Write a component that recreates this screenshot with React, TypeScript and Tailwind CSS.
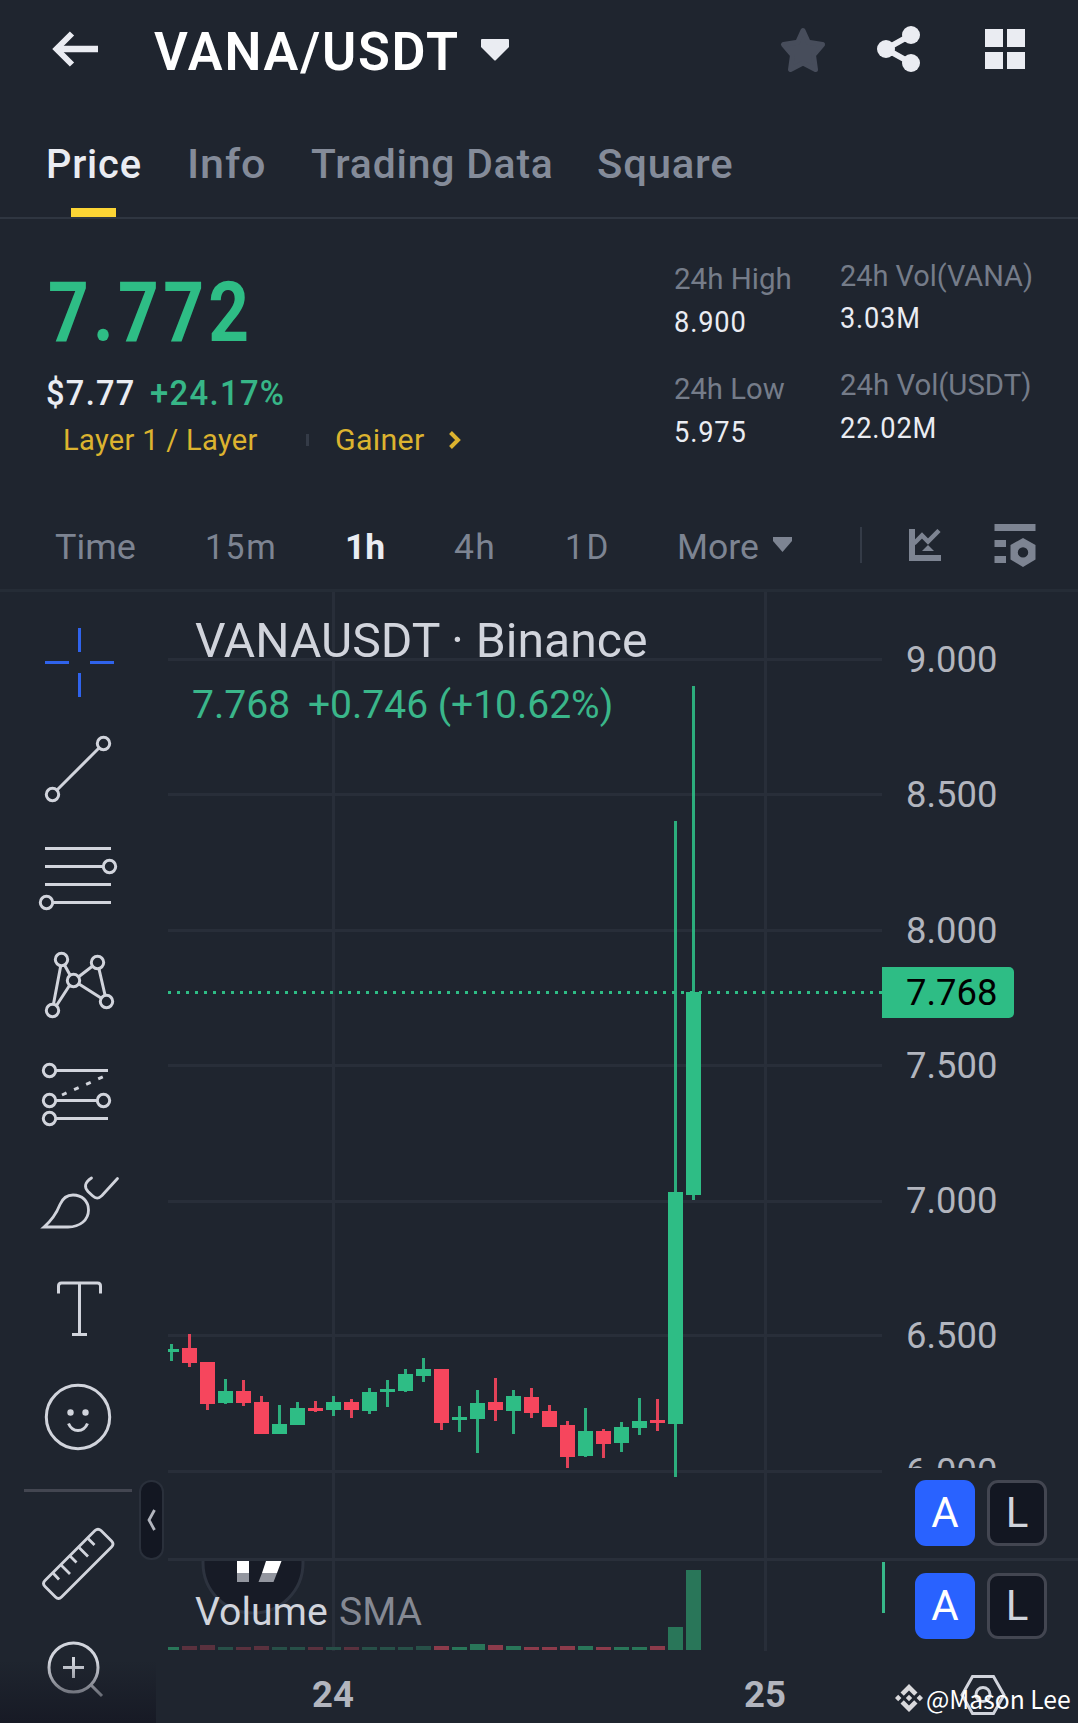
import { useLayoutEffect, useRef, useState } from "react";
import type { ReactNode } from "react";

/* Text stretched horizontally so that it fills the width set by its classes. */
function Fit({ className, children }: { className: string; children: ReactNode }) {
  const outer = useRef<HTMLSpanElement>(null);
  const inner = useRef<HTMLSpanElement>(null);
  const [scale, setScale] = useState(1);
  useLayoutEffect(() => {
    if (outer.current && inner.current) {
      setScale(outer.current.clientWidth / inner.current.offsetWidth);
    }
  }, []);
  return (
    <span ref={outer} className={`block shrink-0 whitespace-nowrap ${className}`}>
      <span ref={inner} className="inline-block origin-left whitespace-pre" style={{ transform: `scaleX(${scale})` }}>
        {children}
      </span>
    </span>
  );
}

const GREEN = "#2ebd85";
const RED = "#f6465d";

/* [rising, high, body top, body bottom, low] in page pixels */
const candles: [number, number, number, number, number][] = [
  [1, 1344, 1349.3, 1352, 1361],
  [0, 1334, 1348, 1363, 1367],
  [0, 1362, 1362, 1404, 1410],
  [1, 1379, 1391, 1403, 1404],
  [0, 1380, 1391, 1403, 1406],
  [0, 1396, 1402, 1434, 1434],
  [1, 1405, 1424, 1434, 1434],
  [1, 1402, 1408, 1425, 1425],
  [0, 1401, 1408, 1411, 1412],
  [1, 1396, 1402, 1410, 1416],
  [0, 1399, 1402, 1410, 1418],
  [1, 1388, 1392, 1411, 1414],
  [1, 1380, 1389, 1392, 1407],
  [1, 1369, 1374, 1391, 1392],
  [1, 1358, 1369, 1376, 1382],
  [0, 1369, 1369, 1423, 1430],
  [1, 1406, 1417, 1420, 1432],
  [1, 1390, 1403, 1419, 1453],
  [0, 1378, 1402, 1410, 1421],
  [1, 1390, 1396, 1411, 1434],
  [0, 1388, 1397, 1413, 1418],
  [0, 1405, 1411, 1427, 1427],
  [0, 1421, 1425, 1457, 1468],
  [1, 1408, 1431, 1456, 1457],
  [0, 1429, 1431, 1444, 1458],
  [1, 1422, 1427, 1443, 1452],
  [1, 1398, 1421, 1428, 1435],
  [0, 1399, 1420, 1423, 1431],
  [1, 821, 1192, 1424, 1477],
  [1, 686, 992, 1195, 1200],
];

const volumes = [3, 4, 5, 3, 3, 4, 3, 3, 3, 3, 3, 3, 3, 3, 4, 4, 3, 6, 5, 4, 3, 3, 4, 4, 3, 3, 3, 4, 23, 80];
const gridLines = [658, 793, 928.5, 1064, 1199.5, 1334, 1469.5];
const priceLabels = ["9.000", "8.500", "8.000", "7.500", "7.000", "6.500"];

function Header() {
  return (
    <header className="flex h-[98px] items-center pl-[52px] text-[#eaecf2]">
      <svg className="h-[36px] w-[46px] shrink-0" viewBox="0 0 46 36" fill="none" stroke="currentColor" strokeWidth="6.500">
        <path d="M4 18H46" />
        <path d="M20 2.500 4.500 18l15.500 15.500" strokeWidth="6" />
      </svg>
      <Fit className="ml-[56px] mt-[5px] w-[306px] text-[53px] leading-[60px] font-semibold tracking-[0.035em] text-white">VANA/USDT</Fit>
      <svg className="ml-[21px] mt-[2px] h-[22px] w-[28px] shrink-0" viewBox="0 0 28 22" fill="currentColor">
        <path d="M1 0H27Q28 0 28 1V8L15 21Q14 22 13 21L0 8V1Q0 0 1 0Z" />
      </svg>
      <svg className="ml-[270px] h-[48px] w-[48px] shrink-0 text-[#474d5b]" viewBox="0 0 48 48" fill="currentColor" stroke="currentColor" strokeWidth="5" strokeLinejoin="round">
        <path d="M24 5.500 29.300 17.300 43.500 19.500 34.500 30 36.500 44.500 24 38 11.500 44.500 13.500 30 4.500 19.500 18.700 17.300Z" />
      </svg>
      <svg className="ml-[50px] h-[46px] w-[43px] shrink-0" viewBox="0 0 43 46" fill="currentColor">
        <path d="M34 9 9 23 34 37" fill="none" stroke="currentColor" strokeWidth="6" />
        <circle cx="34" cy="9" r="9" />
        <circle cx="9" cy="23" r="9" />
        <circle cx="34" cy="37" r="9" />
      </svg>
      <div className="ml-[65px] grid grid-cols-2 gap-x-[4px] gap-y-[5px]">
        <i className="h-[17.500px] w-[18px] bg-current" />
        <i className="h-[17.500px] w-[18px] bg-current" />
        <i className="h-[17.500px] w-[18px] bg-current" />
        <i className="h-[17.500px] w-[18px] bg-current" />
      </div>
    </header>
  );
}

function Tabs() {
  return (
    <nav className="relative flex h-[121px] border-b-2 border-[#2f3641] pt-[43px] pl-[46px] text-[41.500px] leading-[46px] font-medium tracking-[0.02em] text-[#848b99]">
      <Fit className="w-[96px] text-[#eaecf2]">Price</Fit>
      <Fit className="ml-[45px] w-[79px]">Info</Fit>
      <Fit className="ml-[45px] w-[243px]">Trading Data</Fit>
      <Fit className="ml-[43px] w-[137px]">Square</Fit>
      <i className="absolute bottom-0 left-[71px] h-[9px] w-[45px] bg-[#fcd535]" />
    </nav>
  );
}

function Summary() {
  return (
    <section className="flex h-[281px] text-[#eaecf2]">
      <div className="w-[675px] pt-[54px]">
        <Fit className="ml-[48px] w-[205px] text-[83px] leading-[80px] font-bold tracking-[0.06em] text-[#2ebd85]">7.772</Fit>
        <div className="mt-[20px] ml-[46px] flex text-[35.500px] leading-[40px] font-medium tracking-[0.04em]">
          <Fit className="w-[90px]">$7.77</Fit>
          <Fit className="ml-[14px] w-[135px] text-[#37b687]">+24.17%</Fit>
        </div>
        <div className="mt-[10px] flex items-center pl-[63px] text-[30px] leading-[34px] tracking-[0.01em] text-[#dcb32f]">
          <Fit className="w-[195px]">Layer 1 / Layer</Fit>
          <i className="ml-[48px] h-[12px] w-[3px] bg-[#343b47]" />
          <Fit className="ml-[26px] w-[90px]">Gainer</Fit>
          <svg className="ml-[24px] h-[18px] w-[12px]" viewBox="0 0 12 18" fill="none" stroke="currentColor" strokeWidth="4">
            <path d="M1.500 1.500 9 9 1.500 16.500" />
          </svg>
        </div>
      </div>
      <div className="-ml-px flex w-[166px] flex-col pt-[42px] text-[29.500px] leading-[36px]">
        <Fit className="w-[118px] text-[#757c89]">24h High</Fit>
        <Fit className="mt-[7px] w-[73px] tracking-[0.03em]">8.900</Fit>
        <Fit className="mt-[31px] w-[111px] text-[#757c89]">24h Low</Fit>
        <Fit className="mt-[7px] w-[73px] tracking-[0.03em]">5.975</Fit>
      </div>
      <div className="flex flex-col pt-[39px] text-[29.500px] leading-[36px]">
        <Fit className="w-[193px] text-[#757c89]">24h Vol(VANA)</Fit>
        <Fit className="mt-[6px] w-[81px] tracking-[0.03em]">3.03M</Fit>
        <Fit className="mt-[31px] w-[191px] text-[#757c89]">24h Vol(USDT)</Fit>
        <Fit className="mt-[7px] w-[97px] tracking-[0.03em]">22.02M</Fit>
      </div>
    </section>
  );
}

function TimeFrames() {
  return (
    <section className="flex h-[92px] items-center border-b-[3px] border-[#252c36] pl-[55px] text-[35.500px] leading-[40px] text-[#7d8492]">
      <Fit className="mt-[4px] w-[81px]">Time</Fit>
      <Fit className="mt-[4px] ml-[69px] w-[72px] tracking-[0.05em]">15m</Fit>
      <Fit className="mt-[4px] ml-[68px] w-[40px] font-bold text-[#eaecf2]">1h</Fit>
      <Fit className="mt-[4px] ml-[69px] w-[42px] tracking-[0.04em]">4h</Fit>
      <Fit className="mt-[4px] ml-[69px] w-[46px] tracking-[0.08em]">1D</Fit>
      <Fit className="mt-[4px] ml-[66px] w-[82px]">More</Fit>
      <svg className="ml-[14px] h-[15px] w-[19px] shrink-0" viewBox="0 0 19 15" fill="currentColor">
        <path d="M0 0H19V4L9.500 15 0 4Z" />
      </svg>
      <i className="ml-[68px] h-[36px] w-[2px] bg-[#343b47]" />
      <svg className="ml-[47px] h-[32px] w-[32px] shrink-0" viewBox="0 0 32 32" fill="none" stroke="currentColor">
        <path d="M3 0V29H32" strokeWidth="6" />
        <path d="M5 14.500 13 6.500 19 12.500 30 1.500" strokeWidth="4.500" />
        <path d="M19 16 25 22H13Z" fill="currentColor" stroke="none" />
      </svg>
      <svg className="mt-[2px] ml-[53px] h-[43px] w-[42px] shrink-0" viewBox="0 0 41 43" fill="currentColor">
        <path d="M0 0H41V7H0ZM0 16H11.500V23H0ZM0 32H11.500V39H0Z" />
        <path fillRule="evenodd" d="M28.500 14 41 21V35.500L28.500 43 16 35.500V21ZM28.500 23.200A5.200 5.200 0 1 0 28.500 33.600 5.200 5.200 0 1 0 28.500 23.200Z" />
      </svg>
    </section>
  );
}

function Toolbar() {
  return (
    <aside className="relative w-[168px] shrink-0 text-[#d1d4dc]">
      <svg className="block h-[124px] w-[156px]" viewBox="0 592 156 124" stroke="#2f63ec" strokeWidth="3">
        <path d="M45 662.500H69M90 662.500H114M79.500 628V652M79.500 673V697" />
      </svg>
      <svg className="block h-[106px] w-[156px]" viewBox="0 716 156 106" fill="none" stroke="currentColor" strokeWidth="3">
        <path d="M57 790 99 748" />
        <circle cx="52.500" cy="794.500" r="6.200" />
        <circle cx="103.500" cy="743.500" r="6.200" />
      </svg>
      <svg className="block h-[108px] w-[156px]" viewBox="0 822 156 108" fill="none" stroke="currentColor" strokeWidth="3">
        <path d="M45 848.500H111M45 866.500H103M45 884.500H111M53 902.500H111" />
        <circle cx="109.500" cy="866.500" r="6.200" />
        <circle cx="46.500" cy="902.500" r="6.200" />
      </svg>
      <svg className="block h-[110px] w-[156px]" viewBox="0 930 156 110" fill="none" stroke="currentColor" strokeWidth="3">
        <path d="M60.700 966 53.500 1004M64.500 965 70 975M79 976.500 92 966.500M99 969 105 995M79 984 101 998M69.500 985.500 56.500 1005.500" />
        <circle cx="61.500" cy="959.500" r="6.200" />
        <circle cx="97.500" cy="962.500" r="6.200" />
        <circle cx="73.500" cy="980.500" r="6.200" />
        <circle cx="106.500" cy="1001.500" r="6.200" />
        <circle cx="52.500" cy="1010.500" r="6.200" />
      </svg>
      <svg className="block h-[108px] w-[156px]" viewBox="0 1040 156 108" fill="none" stroke="currentColor" strokeWidth="3">
        <path d="M56 1070.500H108M56 1100.500H97M56 1118.500H108" />
        <path d="M62 1095 106 1075.500" strokeDasharray="5 8.200" />
        <circle cx="49.500" cy="1070.500" r="6.200" />
        <circle cx="49.500" cy="1100.500" r="6.200" />
        <circle cx="103.500" cy="1100.500" r="6.200" />
        <circle cx="49.500" cy="1118.500" r="6.200" />
      </svg>
      <svg className="block h-[108px] w-[156px]" viewBox="0 1148 156 108" fill="none" stroke="currentColor" strokeWidth="2.800">
        <path d="M44 1227C51 1221 57 1212 60 1204.500C63 1197.500 67 1195 73 1195C82 1195 88.500 1201 88.500 1210C88.500 1220 80 1227 68 1227Z" />
        <path d="M91.500 1178C84.500 1182.500 84 1187 88 1191.500L92.500 1195.800C96 1199 98.500 1199 102 1195.500L117.500 1178.500" strokeLinecap="round" />
      </svg>
      <svg className="block h-[107px] w-[156px]" viewBox="0 1256 156 107" fill="none" stroke="currentColor" strokeWidth="3">
        <path d="M58.500 1293.500V1286Q58.500 1283 61.500 1283H97.500Q100.500 1283 100.500 1286V1293.500M79.500 1283V1334.500M72 1334.500H87" />
      </svg>
      <svg className="block h-[107px] w-[156px]" viewBox="0 1363 156 107" fill="none" stroke="currentColor" strokeWidth="3">
        <circle cx="78" cy="1417" r="31.700" />
        <path d="M68.500 1423.500Q71.500 1430.500 78 1430.500T87.500 1423.500" />
        <circle cx="70.500" cy="1412.500" r="3.200" fill="currentColor" stroke="none" />
        <circle cx="85.500" cy="1412.500" r="3.200" fill="currentColor" stroke="none" />
      </svg>
      <div className="flex h-[40px] items-center pl-[24px]">
        <i className="h-[3px] w-[108px] bg-[#434651]" />
      </div>
      <svg className="block h-[110px] w-[156px]" viewBox="0 1510 156 110" fill="none" stroke="currentColor" strokeWidth="2.800">
        <path d="M95 1530.500Q98 1528 101 1530.500L111.500 1541Q114.500 1544 111.500 1547L61.500 1597Q58.500 1600 55.500 1597L45 1586.500Q42 1583.500 45 1580.500Z" />
        <path d="M53 1573 59 1579.500M61 1565 70 1574M70 1556 76.500 1562.500M79 1547.500 88 1556.500M88 1538.500 94.500 1545" />
      </svg>
      <svg className="block h-[103px] w-[156px]" viewBox="0 1620 156 103" fill="none" stroke="currentColor" strokeWidth="3">
        <circle cx="73.500" cy="1667.500" r="24.500" />
        <path d="M63 1667.500H84M73.500 1657V1678M91 1685 102 1696" />
      </svg>
      <i className="absolute bottom-0 left-0 h-[62px] w-[156px] bg-linear-to-b from-[#171a25]/0 to-[#171a25]" />
      <div className="absolute top-[888px] left-[139px] flex h-[80px] w-[25px] items-center justify-center rounded-[12px] border-2 border-[#2a303b] bg-[#131722]">
        <svg className="h-[22px] w-[9px]" viewBox="0 0 9 22" fill="none" stroke="#b2b5be" strokeWidth="2.800">
          <path d="M7.500 1 2 11l5.500 10" />
        </svg>
      </div>
    </aside>
  );
}

function ScaleButtons() {
  return (
    <div className="flex gap-[12px] pl-[33px] text-center text-[42px] leading-[65px]">
      <div className="h-[66px] w-[60px] rounded-[11px] bg-[#2962ff] text-white">A</div>
      <div className="h-[66px] w-[60px] rounded-[11px] border-[3px] border-[#434651] bg-[#131722] leading-[59px] text-[#d1d4dc]">L</div>
    </div>
  );
}

function PricePane() {
  return (
    <div className="relative flex h-[966px]">
      <svg className="block h-[966px] w-[714px] shrink-0" viewBox="168 592 714 966" shapeRendering="crispEdges">
        {gridLines.map((y) => (
          <rect key={y} x="168" y={y} width="714" height="3" fill="#282e39" />
        ))}
        <rect x="332" y="592" width="3" height="966" fill="#282e39" />
        <rect x="764" y="592" width="3" height="966" fill="#282e39" />
        <path d="M168 992.500H882" stroke={GREEN} strokeWidth="3" strokeDasharray="3 6" />
        {candles.map(([up, high, top, bottom, low], i) => (
          <g key={i} fill={up ? GREEN : RED}>
            <rect x={170 + i * 18} y={high} width="3" height={low - high} opacity="0.9" />
            <rect x={164 + i * 18} y={top} width="15" height={bottom - top} />
          </g>
        ))}
      </svg>
      <div className="flex w-[196px] flex-col text-[36px] text-[#b2b5be]">
        {priceLabels.map((label) => (
          <Fit key={label} className="ml-[24px] h-[135.300px] w-[91px] leading-[136px]">
            {label}
          </Fit>
        ))}
        <div className="h-[64px] overflow-hidden pt-[50px]">
          <Fit className="ml-[24px] w-[91px] leading-[36px]">6.000</Fit>
        </div>
        <div className="mt-[12px]">
          <ScaleButtons />
        </div>
      </div>
      <div className="absolute top-[375px] left-[714px] h-[51px] w-[132px] rounded-r-[5px] bg-[#2ebd85] pl-[24px] text-[36px] leading-[53px] text-black">
        <Fit className="w-[91px]">7.768</Fit>
      </div>
      <div className="absolute top-[21px] left-[24px]">
        <Fit className="ml-[3px] w-[453px] text-[48px] leading-[56px] text-[#d1d4dc]">VANAUSDT · Binance</Fit>
        <div className="mt-[16px] flex text-[39.500px] leading-[40px] text-[#3ab68a]">
          <Fit className="w-[98px]">7.768</Fit>
          <Fit className="ml-[18px] w-[305px]">+0.746 (+10.62%)</Fit>
        </div>
      </div>
    </div>
  );
}

function volumeColor(up: number, i: number) {
  const dim = i > 0 && i < 15;
  if (up) return dim ? "#275048" : "#297659";
  return dim ? "#5a313e" : "#8c3b4b";
}

function VolumePane() {
  return (
    <div className="relative flex h-[100px]">
      <svg className="block h-[100px] w-[714px] shrink-0" viewBox="168 1561 714 100">
        <rect x="332" y="1561" width="3" height="90" fill="#282e39" />
        <rect x="764" y="1561" width="3" height="90" fill="#282e39" />
        <circle cx="253" cy="1563" r="50" fill="#171b26" stroke="#2d333f" strokeWidth="3" />
        <path d="M237 1561H249V1573H237ZM266 1561H281.500L277 1573H262Z" fill="#fff" />
        <path d="M237 1573H249V1582H237ZM262 1573H277L273.500 1582H258.500Z" fill="#93969f" />
        {volumes.map((v, i) => (
          <rect key={i} x={164 + i * 18} y={1650 - v} width="15" height={v} fill={volumeColor(candles[i][0], i)} />
        ))}
      </svg>
      <i className="mt-[1px] h-[51px] w-[3px] bg-[#37b889]" />
      <div className="-ml-[3px] mt-[12px]">
        <ScaleButtons />
      </div>
      <div className="absolute top-[27px] left-[27px] flex text-[39.500px] leading-[48px]">
        <Fit className="w-[133px] text-[#d1d4dc]">Volume</Fit>
        <Fit className="ml-[11px] w-[83px] text-[#858993]">SMA</Fit>
      </div>
    </div>
  );
}

function TimeAxis() {
  return (
    <div className="relative flex h-[62px] pt-[11px] text-[36.500px] leading-[46px] font-bold text-[#b2b5be]">
      <Fit className="ml-[144px] w-[42px]">24</Fit>
      <Fit className="ml-[390px] w-[42px]">25</Fit>
      <svg className="ml-[174px] mt-[3px] h-[40px] w-[46px]" viewBox="0 0 46 40" fill="none" stroke="#d1d4dc" strokeWidth="3">
        <path d="M12.500 1.500H33.500L44 20 33.500 38.500H12.500L2 20Z" />
        <circle cx="23" cy="19.500" r="7" />
      </svg>
      <div className="absolute top-[19px] left-[727px] flex items-center">
        <svg className="h-[28px] w-[28px]" viewBox="0 0 28 28" fill="#d9d9dc">
          <path d="M14 0 22.500 8.500 19.200 11.800 14 6.600 8.800 11.800 5.500 8.500ZM14 28 22.500 19.500 19.200 16.200 14 21.400 8.800 16.200 5.500 19.500ZM14 10.800 17.200 14 14 17.200 10.800 14ZM3.200 10.800 6.400 14 3.200 17.200 0 14ZM24.800 10.800 28 14 24.800 17.200 21.600 14Z" />
        </svg>
        <Fit className="ml-[3px] w-[145px] font-['Noto_Sans_CJK_SC','Noto_Sans',sans-serif] text-[25px] leading-[36px] font-normal text-white">@Mason Lee</Fit>
      </div>
    </div>
  );
}

export default function App() {
  return (
    <main className="flex h-[1723px] w-[1078px] flex-col overflow-hidden bg-[#1f252f] font-['Roboto',sans-serif]">
      <Header />
      <Tabs />
      <Summary />
      <TimeFrames />
      <section className="flex">
        <Toolbar />
        <div className="w-[910px]">
          <PricePane />
          <div className="h-[3px] bg-[#292f3a]" />
          <VolumePane />
          <TimeAxis />
        </div>
      </section>
    </main>
  );
}
